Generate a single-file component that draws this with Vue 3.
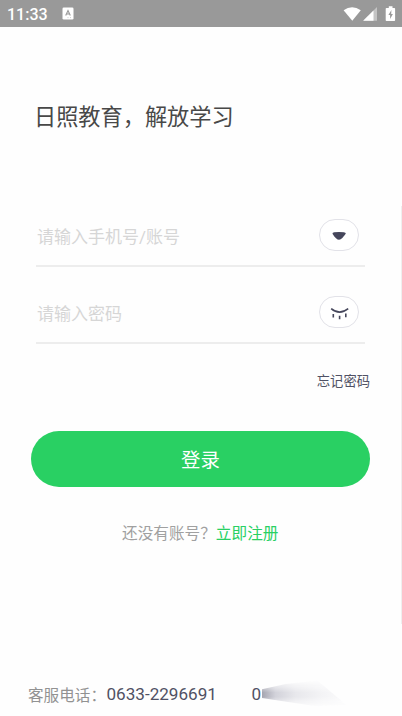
<script setup>
import { ref } from 'vue'

const account = ref('')
const password = ref('')
</script>

<template>
  <main class="screen">
    <header class="status">
      <span class="time">11:33</span>
      <svg class="app-icon" viewBox="0 0 12 13">
        <rect x="0.5" y="0.5" width="11" height="12" rx="1.3" fill="#fff" />
        <path d="M3.7 8.5 6 3.5l2.3 5M4.6 7h2.8" fill="none" stroke="#999" stroke-width="1.1" />
        <path d="M5.5 10.6h1M8 10.6h1" stroke="#bbb" stroke-width=".7" />
      </svg>
      <svg class="signals" viewBox="0 0 54 18">
        <path d="M.6 4.2Q9 -1.5 17.8 4.2L9.3 14.7Z" fill="#fff" />
        <path d="M34 1v13.7H20.2Z" fill="#c4c4c4" />
        <path d="M30.5 4.5v10.2H20.2Z" fill="#fff" />
        <path d="M43.5 2h2.3V.3h3.7V2h1.8q.8 0 .8.8v11.4q0 .8-.8.8h-7.8q-.8 0-.8-.8V2.8q0-.8.8-.8Z" fill="#fff" />
        <path d="m48.4 4-3 5h1.7v4l2.8-5h-1.7Z" fill="#999" />
      </svg>
    </header>

    <div class="content">
      <h1>日照教育，解放学习</h1>

      <form class="form" @submit.prevent>
        <div class="field">
          <input v-model="account" type="text" placeholder="请输入手机号/账号" />
          <button class="pill" type="button">
            <svg viewBox="0 0 38 30">
              <path d="M12.5 13.2Q12.6 11.9 19 11.9T25.8 13.2Q25.6 14.300 22.300 18Q19.200 21.400 16 18.200Q12.700 14.700 12.500 13.2Z" fill="#45465b" />
            </svg>
          </button>
        </div>
        <div class="field">
          <input v-model="password" type="password" placeholder="请输入密码" />
          <button class="pill" type="button">
            <svg viewBox="0 0 38 30">
              <path d="M11.2 11.7Q19.5 18.7 28.2 11.7" />
              <path d="M13.3 17v3.4M19.6 18.7v3.6M25.8 16.5v3.7" />
            </svg>
          </button>
        </div>
        <a class="forgot">忘记密码</a>
        <button class="login" type="submit">登录</button>
      </form>

      <p class="register">还没有账号？<a>立即注册</a></p>
    </div>

    <footer class="service">
      <span class="label">客服电话：</span>
      <span class="phone">0633-2296691</span>
      <span class="second">0</span>
      <i class="fade"></i>
    </footer>
    <i class="edge"></i>
  </main>
</template>

<style>
body {
  background: #fefefe;
}
</style>

<style scoped>
.screen {
  position: relative;
  display: flex;
  flex-direction: column;
  box-sizing: border-box;
  width: 402px;
  height: 716px;
  overflow: hidden;
  background: #fefefe;
  font-family: Roboto, "Noto Sans CJK SC", sans-serif;
  color: #505164;
}
.status {
  display: flex;
  align-items: center;
  flex: none;
  box-sizing: border-box;
  height: 27px;
  padding: 0 5px 0 7px;
  background: #999;
}
.time {
  width: 55px;
  color: #fff;
  font-size: 16px;
  font-weight: 500;
  line-height: 28px;
  padding-top: 2px;
}
.app-icon {
  width: 12px;
  height: 13px;
}
.signals {
  width: 54px;
  height: 18px;
  margin-left: auto;
  padding-top: 2px;
}
.content {
  flex: 1;
  padding: 0 32px 0 31px;
}
h1 {
  margin: 73px 0 0 3px;
  color: #484848;
  font-size: 22.2px;
  font-weight: 400;
  line-height: 34px;
  white-space: nowrap;
}
.form {
  display: flex;
  flex-direction: column;
  margin-top: 56px;
}
.field {
  display: flex;
  align-items: center;
  box-sizing: border-box;
  height: 77px;
  margin: 0 5px;
  padding: 14px 6px 0 1px;
  border-bottom: 2px solid #ededed;
}
input {
  flex: 1;
  min-width: 0;
  padding: 4px 0 0;
  border: 0;
  outline: 0;
  background: transparent;
  font: 17px/26px Roboto, "Noto Sans CJK SC", sans-serif;
}
input::placeholder {
  color: #d6d6d6;
  opacity: 1;
}
.pill {
  box-sizing: border-box;
  width: 40px;
  height: 32px;
  padding: 0;
  border: 1px solid #e2e2e8;
  border-radius: 16px;
  background: #fff;
}
.pill svg {
  display: block;
  width: 38px;
  height: 30px;
  fill: none;
  stroke-width: 1.6;
}
.pill path:not([fill]) {
  stroke: #45465b;
}
.forgot {
  align-self: flex-end;
  margin-top: 28px;
  font-size: 13.3px;
  line-height: 20px;
}
.login {
  height: 56px;
  margin-top: 39px;
  padding: 3px 0 0;
  border: 0;
  border-radius: 28px;
  background: #29d063;
  color: #fff;
  font: 19.4px/53px Roboto, "Noto Sans CJK SC", sans-serif;
}
.register {
  margin: 35px 0 0;
  padding-left: 91px;
  color: #a0a0a0;
  font-size: 15.65px;
  line-height: 24px;
  white-space: nowrap;
}
.register a {
  color: #29d063;
}
.service {
  display: flex;
  align-items: center;
  flex: none;
  height: 44px;
  padding-left: 28px;
  font-size: 17.1px;
  white-space: nowrap;
}
.label {
  width: 78.5px;
  color: #929292;
  font-size: 15.6px;
}
.phone {
  width: 145px;
}
.second {
  width: 10.5px;
}
.fade {
  width: 84px;
  height: 28px;
  background: linear-gradient(90deg, #a5a5b0, #d2d2da 16%, #e8e8ec 40%, #f3f3f5 70%, #fbfbfc);
  clip-path: polygon(0 33%, 28% 14%, 66% 2%, 100% 88%, 64% 94%, 0 64%);
  -webkit-mask-image: linear-gradient(transparent, #000 45%, #000 60%, transparent);
  mask-image: linear-gradient(transparent, #000 45%, #000 60%, transparent);
}
.edge {
  position: absolute;
  top: 206px;
  right: 0;
  width: 1px;
  height: 418px;
  background: #efefef;
}
</style>
